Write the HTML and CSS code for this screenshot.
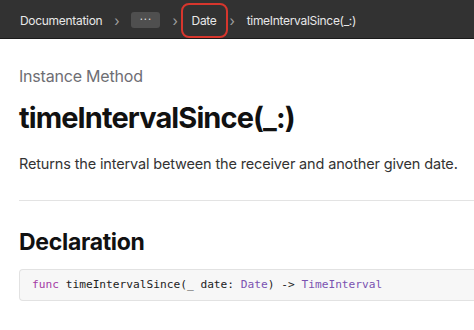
FILE: index.html
```html
<!DOCTYPE html>
<html lang="en">
<head>
  <meta charset="UTF-8">
  <title>timeIntervalSince(_:)</title>
  <link rel="stylesheet" href="styles.css">
</head>
<body>

  <nav class="crumbs">
    <span class="crumb">Documentation</span>
    <span class="sep">›</span>
    <span class="more">···</span>
    <span class="sep">›</span>
    <span class="crumb current">Date</span>
    <span class="sep">›</span>
    <span class="crumb">timeIntervalSince(_:)</span>
  </nav>

  <main class="content">
    <div class="eyebrow">Instance Method</div>
    <h1 class="title">timeIntervalSince(_:)</h1>
    <p class="abstract">Returns the interval between the receiver and another given date.</p>
    <hr class="rule">
    <h2 class="section">Declaration</h2>
    <pre class="code"><span class="kw">func</span> timeIntervalSince(_ date: <span class="ty">Date</span>) -&gt; <span class="ty">TimeInterval</span></pre>
  </main>

</body>
</html>
```

FILE: styles.css
```css
body {
  margin: 0;
  background: #fff;
  color: #1d1d1f;
  font-family: Inter, 'Liberation Sans', sans-serif;
  overflow: hidden;
}

.crumbs {
  display: flex;
  align-items: center;
  height: 36px;
  padding: 2px 0 0 20px;
  background: #323232;
  border-bottom: 1px solid #1a1a1a;
  color: #e8e8e8;
  font-size: 12px;
  letter-spacing: -0.3px;
  white-space: nowrap;
}

.sep {
  color: #a0a0a0;
  font-size: 14px;
  margin: 0 12px;
}

.more {
  display: inline-block;
  width: 29px;
  height: 16px;
  line-height: 14px;
  text-align: center;
  background: #4f4f4f;
  border-radius: 3px;
  color: #ddd;
  font-size: 11px;
  letter-spacing: 1px;
}

.current {
  padding: 8px 9px;
  margin: 0 -10px 0 -9px;
  border: 2px solid #d7362d;
  border-radius: 8px;
}

.content {
  padding: 0 0 0 19px;
}

.eyebrow {
  margin-top: 27px;
  color: #6e6e73;
  font-size: 16px;
  letter-spacing: -0.2px;
}

.title {
  margin: 15px 0 0;
  font-size: 29px;
  line-height: 34px;
  font-weight: bold;
  letter-spacing: -0.9px;
  color: #111;
}

.abstract {
  margin: 20px 0 0;
  font-size: 14.5px;
  letter-spacing: -0.15px;
  color: #333;
}

.rule {
  margin: 28px 0 0;
  border: 0;
  border-top: 1px solid #e3e3e3;
}

.section {
  margin: 27px 0 0;
  font-size: 23px;
  line-height: 28px;
  font-weight: bold;
  letter-spacing: -0.3px;
  color: #111;
}

.code {
  margin: 13px 0 0;
  padding: 8px 12px;
  background: #f7f7f7;
  border: 1px solid #e2e2e2;
  border-right: 0;
  border-radius: 4px 0 0 4px;
  font-family: 'DejaVu Sans Mono', monospace;
  font-size: 11.2px;
  line-height: 14px;
  color: #222;
}

.kw { color: #a43ba5; }
.ty { color: #7b53b1; }
```
